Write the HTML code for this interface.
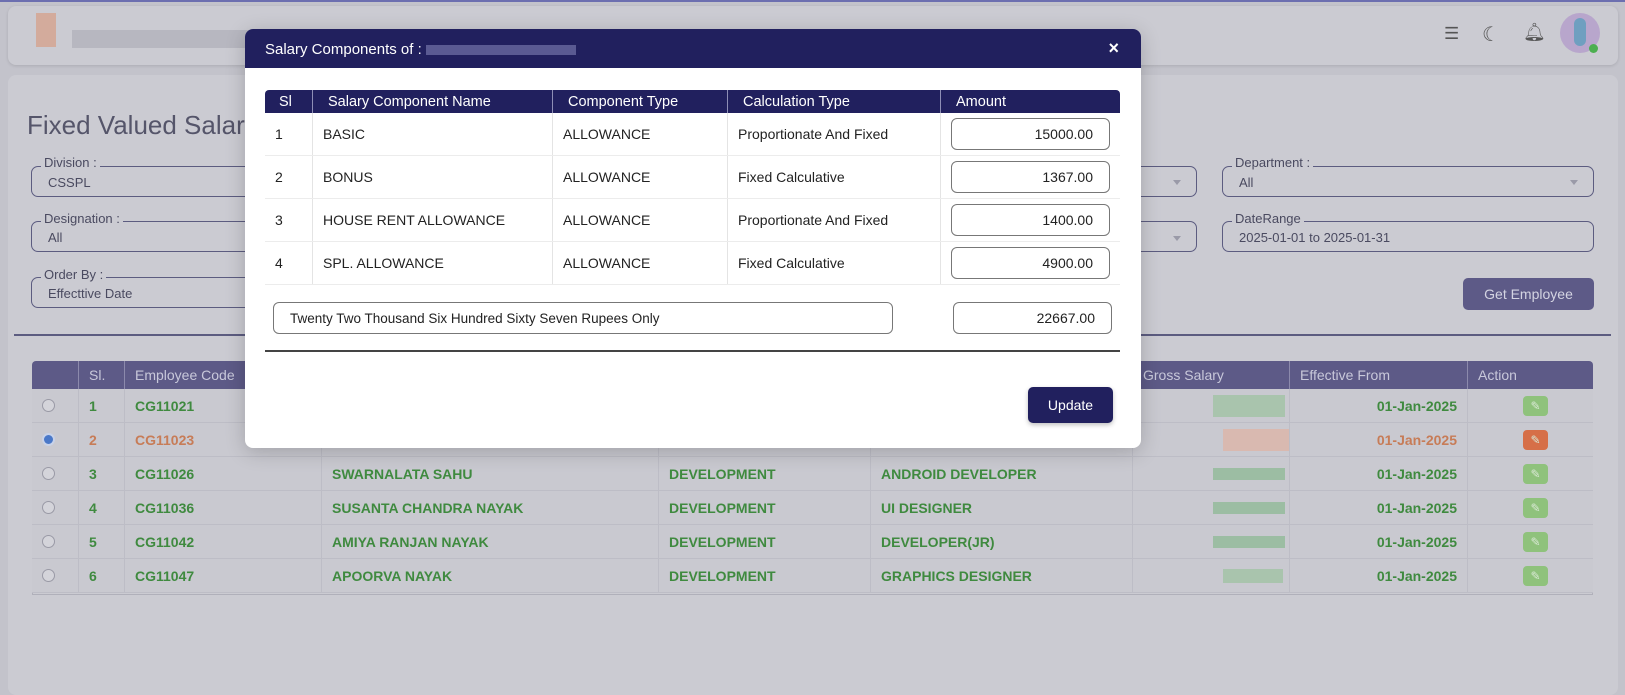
<!DOCTYPE html>
<html><head><meta charset="utf-8"><style>
*{box-sizing:border-box;margin:0;padding:0}
body{width:1625px;height:675px;overflow:hidden;background:#c3c3cb;font-family:"Liberation Sans",sans-serif;position:relative;color:#333}
.a{position:absolute}
.topline{left:0;top:0;width:1625px;height:2px;background:#6c6fb0}
.nav{left:8px;top:6px;width:1610px;height:59px;background:#cbcbd2;border-radius:8px;box-shadow:0 1px 3px rgba(0,0,0,.12)}
.card{left:8px;top:75px;width:1610px;height:620px;background:#cbcbd2;border-radius:8px}
.blur{background:#b7b7c0;height:18px;top:30px}
.fld{border:1.5px solid #5c5c80;border-radius:7px;height:31px;font-size:13px;color:#4a4a60;padding:8px 16px}
.lbl{font-size:13px;color:#4a4a60;background:#cbcbd2;padding:0 3px;line-height:14px}
.caret{width:0;height:0;border-left:4px solid transparent;border-right:4px solid transparent;border-top:5px solid #9a9aa8}
.bt{display:flex;position:absolute;left:32px;width:1561px;font-size:14px}
.bt div{border-right:1px solid #bdbdc6;padding-left:10px;display:flex;align-items:center;height:100%}
.bh{top:361px;height:28px;background:#5d5a87;color:#c8c8da;border-radius:4px 4px 0 0}
.bh div{border-right:1px solid #8c8aac}
.br{height:34px;border-bottom:1px solid #bdbdc6;color:#3f8a3f;font-weight:bold;background:#c9c9d0}
.br.o{color:#c77c57}
.radio{width:13px;height:13px;border-radius:50%;border:1px solid #9a9aa6;background:#d4d4da}
.ed{width:25px;height:20px;border-radius:4px;background:#8fc27c;margin-left:auto;margin-right:auto;color:#d8e8d4;font-size:12px;text-align:center;line-height:20px;font-weight:normal}
.modal{left:245px;top:29px;width:896px;height:419px;background:#fff;border-radius:8px;box-shadow:0 4px 20px rgba(0,0,0,.2);overflow:hidden}
.mh{height:39px;background:#21205e;color:#fff;font-size:15px;padding:12px 20px}
.mt{position:absolute;left:20px;width:855px;display:flex;font-size:14px;color:#222}
.mt>div{display:flex;align-items:center;padding-left:10px;border-right:1px solid #e4e4e4;height:100%}
.mhd{top:61px;height:23px;background:#21205e;color:#fff;font-size:14.5px;border-radius:4px 4px 0 0}
.mhd>div{border-right:1px solid #8e8eb5}
.mr{height:43px;border-bottom:1px solid #ececec}
.inp{border:1px solid #777;border-radius:6px;height:32px;width:159px;text-align:right;padding:7px 16px;font-size:14px;color:#222}
</style></head><body>
<div class="a topline"></div>
<div class="a nav"></div>
<div class="a" style="left:36px;top:13px;width:20px;height:34px;background:#d4a38f;opacity:.8"></div>
<div class="a blur" style="left:72px;width:670px"></div>
<div class="a" style="left:1444px;top:24px;font-size:17px;color:#555">☰</div>
<div class="a" style="left:1482px;top:22px;font-size:20px;color:#555">☾</div>
<div class="a" style="left:1523px;top:22px;font-size:18px;color:#555">🔔︎</div>
<div class="a" style="left:1560px;top:13px;width:40px;height:40px;border-radius:50%;background:#b8a6cc"></div>
<div class="a" style="left:1574px;top:18px;width:12px;height:28px;border-radius:6px;background:#6f9fc0"></div>
<div class="a" style="left:1589px;top:44px;width:9px;height:9px;border-radius:50%;background:#4caf50"></div>
<div class="a card"></div>
<div class="a" style="left:27px;top:110px;font-size:26px;color:#55556a">Fixed Valued Salary</div>

<div class="a fld" style="left:31px;top:166px;width:1166px">CSSPL</div>
<div class="a lbl" style="left:41px;top:156px">Division :</div>
<div class="a caret" style="left:1173px;top:180px"></div>
<div class="a fld" style="left:31px;top:221px;width:1166px">All</div>
<div class="a lbl" style="left:41px;top:212px">Designation :</div>
<div class="a caret" style="left:1173px;top:236px"></div>
<div class="a fld" style="left:31px;top:277px;width:560px">Effecttive Date</div>
<div class="a lbl" style="left:41px;top:268px">Order By :</div>
<div class="a fld" style="left:1222px;top:166px;width:372px">All</div>
<div class="a lbl" style="left:1232px;top:156px">Department :</div>
<div class="a caret" style="left:1570px;top:180px"></div>
<div class="a fld" style="left:1222px;top:221px;width:372px">2025-01-01 to 2025-01-31</div>
<div class="a lbl" style="left:1232px;top:212px">DateRange</div>
<div class="a" style="left:1463px;top:278px;width:131px;height:32px;background:#5d5a87;border-radius:5px;color:#d4d4e2;font-size:14px;text-align:center;line-height:32px">Get Employee</div>
<div class="a" style="left:14px;top:334px;width:1597px;height:1.5px;background:#5c5c80"></div>

<div class="bt bh"><div style="width:47px"></div><div style="width:46px">Sl.</div><div style="width:197px">Employee Code</div><div style="width:337px"></div><div style="width:212px"></div><div style="width:262px"></div><div style="width:157px">Gross Salary</div><div style="width:178px">Effective From</div><div style="width:125px;border:0">Action</div></div>
<div class="a" style="left:32px;top:389px;width:1561px;height:206px;border:1px solid #b0b0ba;border-top:0"></div>
<div class="bt br" style="top:389px"><div style="width:47px;padding-left:10px"><span class="radio"></span></div><div style="width:46px">1</div><div style="width:197px">CG11021</div><div style="width:337px"></div><div style="width:212px"></div><div style="width:262px"></div><div style="width:157px"><span style="margin-left:70px;width:72px;height:22px;background:#a9c4ad"></span></div><div style="width:178px;justify-content:flex-end;padding-right:10px">01-Jan-2025</div><div style="width:125px;border:0"><span class="ed">✎</span></div></div>
<div class="bt br o" style="top:423px"><div style="width:47px;padding-left:10px"><span class="radio" style="background:#4a78c8;border:2px solid #c8d2e8"></span></div><div style="width:46px">2</div><div style="width:197px">CG11023</div><div style="width:337px"></div><div style="width:212px"></div><div style="width:262px"></div><div style="width:157px"><span style="margin-left:80px;width:72px;height:22px;background:#d9b9b0"></span></div><div style="width:178px;justify-content:flex-end;padding-right:10px">01-Jan-2025</div><div style="width:125px;border:0"><span class="ed" style="background:#d66f48">✎</span></div></div>
<div class="bt br" style="top:457px"><div style="width:47px;padding-left:10px"><span class="radio"></span></div><div style="width:46px">3</div><div style="width:197px">CG11026</div><div style="width:337px">SWARNALATA SAHU</div><div style="width:212px">DEVELOPMENT</div><div style="width:262px">ANDROID DEVELOPER</div><div style="width:157px"><span style="margin-left:70px;width:72px;height:12px;background:#9cbda3"></span></div><div style="width:178px;justify-content:flex-end;padding-right:10px">01-Jan-2025</div><div style="width:125px;border:0"><span class="ed">✎</span></div></div>
<div class="bt br" style="top:491px"><div style="width:47px;padding-left:10px"><span class="radio"></span></div><div style="width:46px">4</div><div style="width:197px">CG11036</div><div style="width:337px">SUSANTA CHANDRA NAYAK</div><div style="width:212px">DEVELOPMENT</div><div style="width:262px">UI DESIGNER</div><div style="width:157px"><span style="margin-left:70px;width:72px;height:12px;background:#9cbda3"></span></div><div style="width:178px;justify-content:flex-end;padding-right:10px">01-Jan-2025</div><div style="width:125px;border:0"><span class="ed">✎</span></div></div>
<div class="bt br" style="top:525px"><div style="width:47px;padding-left:10px"><span class="radio"></span></div><div style="width:46px">5</div><div style="width:197px">CG11042</div><div style="width:337px">AMIYA RANJAN NAYAK</div><div style="width:212px">DEVELOPMENT</div><div style="width:262px">DEVELOPER(JR)</div><div style="width:157px"><span style="margin-left:70px;width:72px;height:12px;background:#9cbda3"></span></div><div style="width:178px;justify-content:flex-end;padding-right:10px">01-Jan-2025</div><div style="width:125px;border:0"><span class="ed">✎</span></div></div>
<div class="bt br" style="top:559px"><div style="width:47px;padding-left:10px"><span class="radio"></span></div><div style="width:46px">6</div><div style="width:197px">CG11047</div><div style="width:337px">APOORVA NAYAK</div><div style="width:212px">DEVELOPMENT</div><div style="width:262px">GRAPHICS DESIGNER</div><div style="width:157px"><span style="margin-left:80px;width:60px;height:14px;background:#a9c4ad"></span></div><div style="width:178px;justify-content:flex-end;padding-right:10px">01-Jan-2025</div><div style="width:125px;border:0"><span class="ed">✎</span></div></div>

<div class="a modal">
<div class="mh">Salary Components of : <span style="display:inline-block;width:150px;height:10px;background:#5a5a92;vertical-align:middle"></span><span style="position:absolute;right:22px;top:9px;font-size:18px;font-weight:bold">×</span></div>
<div class="mt mhd"><div style="width:48px;padding-left:14px">Sl</div><div style="width:240px;padding-left:15px">Salary Component Name</div><div style="width:175px;padding-left:15px">Component Type</div><div style="width:213px;padding-left:15px">Calculation Type</div><div style="width:179px;border:0;padding-left:15px">Amount</div></div>
<div class="mt mr" style="top:84px"><div style="width:48px">1</div><div style="width:240px">BASIC</div><div style="width:175px">ALLOWANCE</div><div style="width:213px">Proportionate And Fixed</div><div style="width:179px;border:0"><div class="inp">15000.00</div></div></div>
<div class="mt mr" style="top:127px"><div style="width:48px">2</div><div style="width:240px">BONUS</div><div style="width:175px">ALLOWANCE</div><div style="width:213px">Fixed Calculative</div><div style="width:179px;border:0"><div class="inp">1367.00</div></div></div>
<div class="mt mr" style="top:170px"><div style="width:48px">3</div><div style="width:240px">HOUSE RENT ALLOWANCE</div><div style="width:175px">ALLOWANCE</div><div style="width:213px">Proportionate And Fixed</div><div style="width:179px;border:0"><div class="inp">1400.00</div></div></div>
<div class="mt mr" style="top:213px"><div style="width:48px">4</div><div style="width:240px">SPL. ALLOWANCE</div><div style="width:175px">ALLOWANCE</div><div style="width:213px">Fixed Calculative</div><div style="width:179px;border:0"><div class="inp">4900.00</div></div></div>
<div class="a" style="left:28px;top:273px;width:620px;height:32px;border:1px solid #777;border-radius:6px;font-size:13.5px;padding:8px 16px;color:#222">Twenty Two Thousand Six Hundred Sixty Seven Rupees Only</div>
<div class="a inp" style="left:708px;top:273px">22667.00</div>
<div class="a" style="left:20px;top:321px;width:855px;height:1.5px;background:#444"></div>
<div class="a" style="left:783px;top:358px;width:85px;height:36px;background:#21205e;border-radius:5px;color:#fff;font-size:14px;text-align:center;line-height:36px;box-shadow:0 2px 5px rgba(0,0,0,.25)">Update</div>
</div>
</body></html>
